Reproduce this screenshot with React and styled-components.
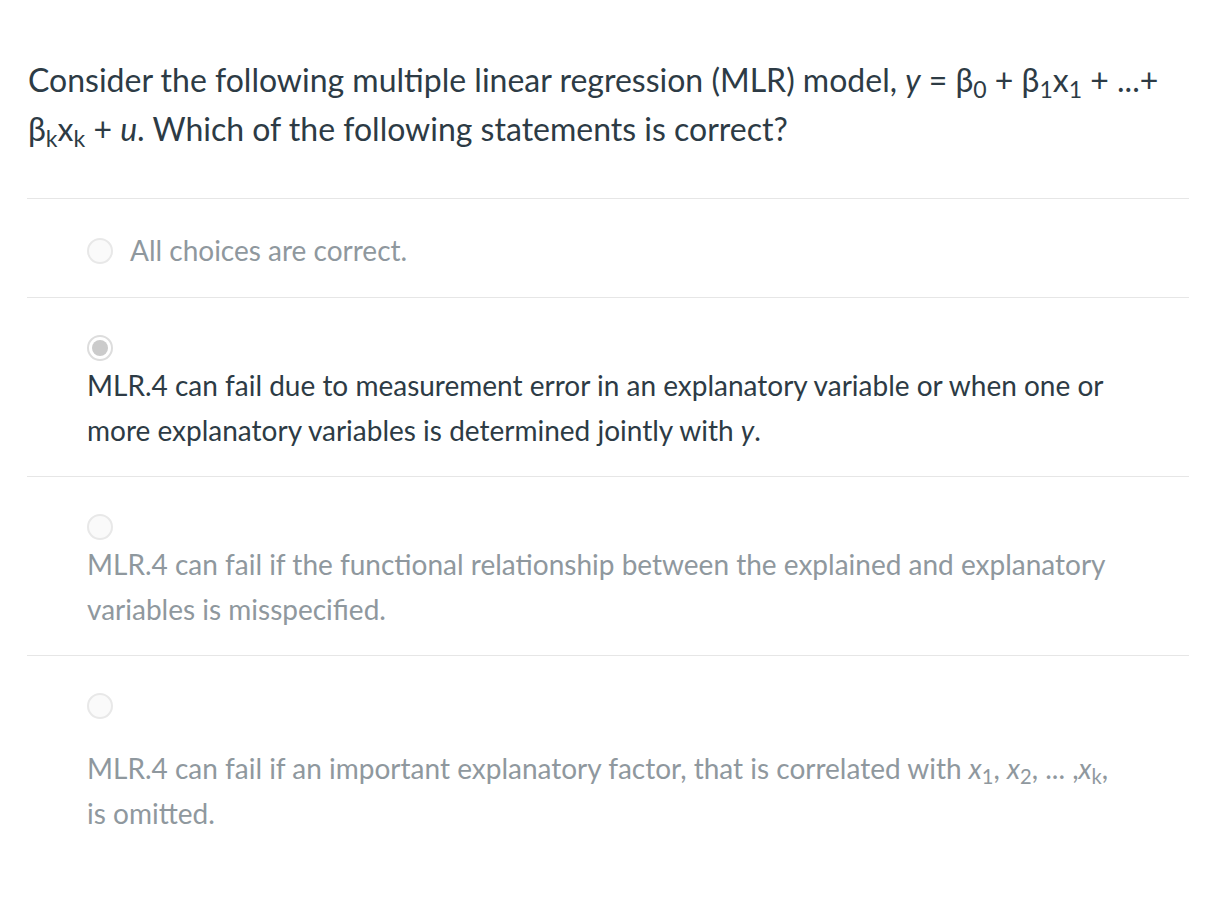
import React from 'react';
import styled, { createGlobalStyle } from 'styled-components';

const GlobalStyle = createGlobalStyle`
  body {
    margin: 0;
    background: #ffffff;
    font-family: Lato, "Open Sans", sans-serif;
  }
`;

const Page = styled.div`
  width: 1228px;
  padding: 55px 39px 0 27px;
  box-sizing: border-box;
`;

const Question = styled.div`
  padding: 0 0 0 1px;
  margin: 0 -20px 45px 0;
  font-size: 32px;
  line-height: 49px;
  color: #2d3b45;

  sub {
    font-size: 0.72em;
    line-height: 0;
    vertical-align: -0.26em;
  }
`;

const Answers = styled.div`
  display: flex;
  flex-direction: column;
`;

const Answer = styled.div`
  display: flex;
  flex-direction: ${(p) => (p.$inline ? 'row' : 'column')};
  align-items: ${(p) => (p.$inline ? 'center' : 'flex-start')};
  gap: ${(p) => (p.$inline ? '17px' : '0')};
  padding: ${(p) => (p.$inline ? '29px 72px 24px 60px' : '37px 72px 23px 60px')};
  border-top: 1px solid #e6e6e6;
`;

const Radio = styled.span`
  flex: none;
  width: 26px;
  height: 26px;
  border-radius: 50%;
  box-sizing: border-box;
  border: 2px solid ${(p) => (p.$checked ? '#dddddd' : '#e8e8e8')};
  background: ${(p) => (p.$checked ? '#ffffff' : '#fafafa')};
  display: flex;
  align-items: center;
  justify-content: center;

  &::after {
    content: '';
    display: ${(p) => (p.$checked ? 'block' : 'none')};
    width: 16px;
    height: 16px;
    border-radius: 50%;
    background: #cbcbcb;
  }
`;

const Label = styled.div`
  font-size: 28px;
  line-height: 45px;
  color: ${(p) => (p.$selected ? '#2d3b45' : '#8f989e')};
  margin-top: ${(p) => p.$drop || 0}px;

  sub {
    font-size: 0.72em;
    line-height: 0;
    vertical-align: -0.26em;
  }
`;

const answers = [
  { id: 1, inline: true, text: <>All choices are correct.</> },
  {
    id: 2,
    selected: true,
    drop: 2,
    text: (
      <>
        MLR.4 can fail due to measurement error in an explanatory variable or when one or more explanatory
        variables is determined jointly with <i>y</i>.
      </>
    ),
  },
  {
    id: 3,
    drop: 2,
    text: (
      <>
        MLR.4 can fail if the functional relationship between the explained and explanatory variables is
        misspecified.
      </>
    ),
  },
  {
    id: 4,
    drop: 27,
    text: (
      <>
        MLR.4 can fail if an important explanatory factor, that is correlated with <i>x</i>
        <sub>1</sub>, <i>x</i>
        <sub>2</sub>, ... ,<i>x</i>
        <sub>k</sub>, is omitted.
      </>
    ),
  },
];

export default function App() {
  return (
    <Page>
      <GlobalStyle />
      <Question>
        Consider the following multiple linear regression (MLR) model, <i>y</i> = β<sub>0</sub> + β<sub>1</sub>x
        <sub>1</sub> + ...+ β<sub>k</sub>x<sub>k</sub> + <i>u</i>. Which of the following statements is correct?
      </Question>
      <Answers>
        {answers.map((a) => (
          <Answer key={a.id} $inline={a.inline}>
            <Radio $checked={a.selected} />
            <Label $selected={a.selected} $drop={a.drop}>
              {a.text}
            </Label>
          </Answer>
        ))}
      </Answers>
    </Page>
  );
}
